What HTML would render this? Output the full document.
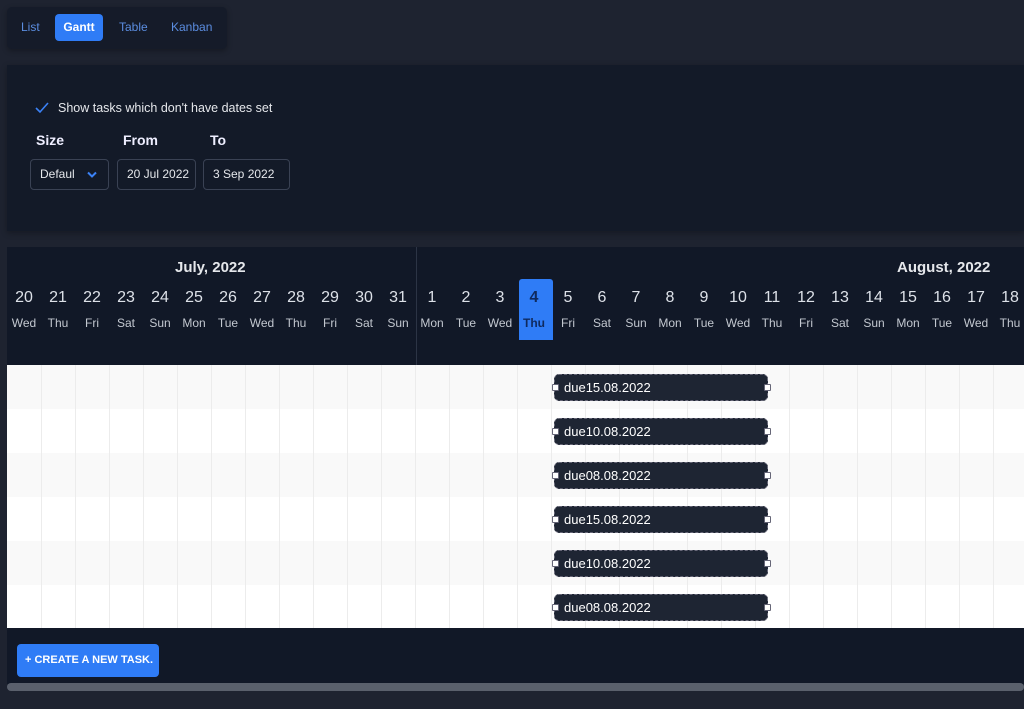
<!DOCTYPE html>
<html><head><meta charset="utf-8">
<style>
*{box-sizing:border-box;margin:0;padding:0}
body{width:1024px;height:709px;overflow:hidden;background:#1e2330;font-family:"Liberation Sans","DejaVu Sans",sans-serif;position:relative;color:#e5e7eb}
.tabs{position:absolute;left:7px;top:7px;width:220px;height:42px;background:#151b29;border-radius:5px;box-shadow:0 2px 6px rgba(0,0,0,.3)}
.tab{position:absolute;top:7px;height:27px;line-height:27px;font-size:12px;color:#5b8de0;padding:0 8px}
.tab.act{background:#2f7cf6;color:#fff;font-weight:bold;border-radius:4px}
.panel{position:absolute;left:7px;top:65px;width:1017px;height:166px;background:#131a28;box-shadow:0 2px 6px rgba(0,0,0,.3)}
.lbl{position:absolute;font-size:14px;font-weight:bold;color:#eef}
.inp{position:absolute;top:94px;height:31px;border:1px solid #3a4254;border-radius:4px;font-size:12px;line-height:29px;padding-left:9px;color:#e5e7eb;overflow:hidden;white-space:nowrap}
.gh{position:absolute;left:7px;top:247px;width:1017px;height:118px;background:#111827;overflow:hidden}
.d{position:absolute;width:34px;text-align:center;color:#e5e7eb}
.d .n{position:absolute;top:42px;width:34px;font-size:16px;color:#dde1e8}
.d .w{position:absolute;top:69px;width:34px;font-size:12px;color:#c3c8d0}
.grid{position:absolute;left:7px;top:365px;width:1017px;height:263px;background:#fff;overflow:hidden}
.row{position:absolute;left:0;width:1017px;height:44px}
.vl{position:absolute;top:0;width:1px;height:263px;background:#ececec}
.bar{position:absolute;left:547px;width:214px;height:27px;background:#1e2533;border:1px dashed #667;border-radius:5px;color:#fff;font-size:13px;line-height:25px;padding-left:9px}
.h{position:absolute;top:9px;width:7px;height:7px;background:#fff;border:1px solid #667;border-radius:1px}
.foot{position:absolute;left:7px;top:628px;width:1017px;height:56px;background:#111827}
.btn{position:absolute;left:10px;top:16px;width:142px;height:33px;background:#2f7cf6;border-radius:4px;color:#fff;font-weight:bold;font-size:11px;line-height:33px;padding-left:8px;white-space:nowrap}
.sb{position:absolute;left:7px;top:683px;width:1017px;height:8px;background:#5a606c;border-radius:4px}
</style></head><body>
<div class="tabs">
<div class="tab" style="left:6px">List</div>
<div class="tab act" style="left:48px;width:48px;text-align:center">Gantt</div>
<div class="tab" style="left:104px">Table</div>
<div class="tab" style="left:156px">Kanban</div>
</div>
<div class="panel">
<svg style="position:absolute;left:27px;top:36px" width="16" height="14"><path d="M2 7 L6 11 L14 2" stroke="#3b82f6" stroke-width="1.6" fill="none"/></svg>
<div style="position:absolute;left:51px;top:36px;font-size:12.5px;color:#e5e7eb">Show tasks which don't have dates set</div>
<div class="lbl" style="left:29px;top:67px">Size</div>
<div class="lbl" style="left:116px;top:67px">From</div>
<div class="lbl" style="left:203px;top:67px">To</div>
<div class="inp" style="left:23px;width:79px">Defaul<svg style="position:absolute;left:56px;top:11px" width="10" height="8"><path d="M1 1.5 L5 5.5 L9 1.5" stroke="#3b82f6" stroke-width="2" fill="none"/></svg></div>
<div class="inp" style="left:110px;width:79px;padding-right:6px">20 Jul 2022</div>
<div class="inp" style="left:196px;width:87px">3 Sep 2022</div>
</div>
<div class="gh" id="gh">
<div style="position:absolute;left:409px;top:0;width:1px;height:118px;background:#2c3445"></div>
<div style="position:absolute;left:168px;top:12px;font-size:15px;font-weight:bold">July, 2022</div>
<div style="position:absolute;left:890px;top:12px;font-size:15px;font-weight:bold">August, 2022</div>
<div style="position:absolute;left:512px;top:32px;width:34px;height:61px;background:#2f7cf6;border-radius:3px 3px 0 0"></div>
</div>
<div class="grid" id="grid"></div>
<div class="foot"><div class="btn">+ CREATE A NEW TASK.</div></div>
<div class="sb"></div>
<script>
var gh=document.getElementById('gh'),g=document.getElementById('grid');
var wd=['Mon','Tue','Wed','Thu','Fri','Sat','Sun'];
var days=[];for(var i=20;i<=31;i++)days.push(i);for(var i=1;i<=18;i++)days.push(i);
var s='';
for(var r=0;r<6;r++)s+='<div class="row" style="top:'+(r*44)+'px;background:'+(r%2==0?'#f9f9f9':'#fff')+'"></div>';
for(var k=0;k<30;k++){
var x=k*34;var w=wd[(k+2)%7];var t=(k==15);
gh.innerHTML+='<div class="d" style="left:'+x+'px"><div class="n" style="'+(t?'font-weight:bold;color:#0f2a5e':'')+'">'+days[k]+'</div><div class="w" style="'+(t?'font-weight:bold;color:#0f2a5e':'')+'">'+w+'</div></div>';
s+='<div class="vl" style="left:'+(x+34)+'px"></div>';
}
var dl=['15','10','08','15','10','08'];
for(var r=0;r<6;r++){s+='<div class="bar" style="top:'+(r*44+9)+'px">due'+dl[r]+'.08.2022<div class="h" style="left:-3px"></div><div class="h" style="right:-4px"></div></div>';}
g.innerHTML=s;
</script>
</body></html>
